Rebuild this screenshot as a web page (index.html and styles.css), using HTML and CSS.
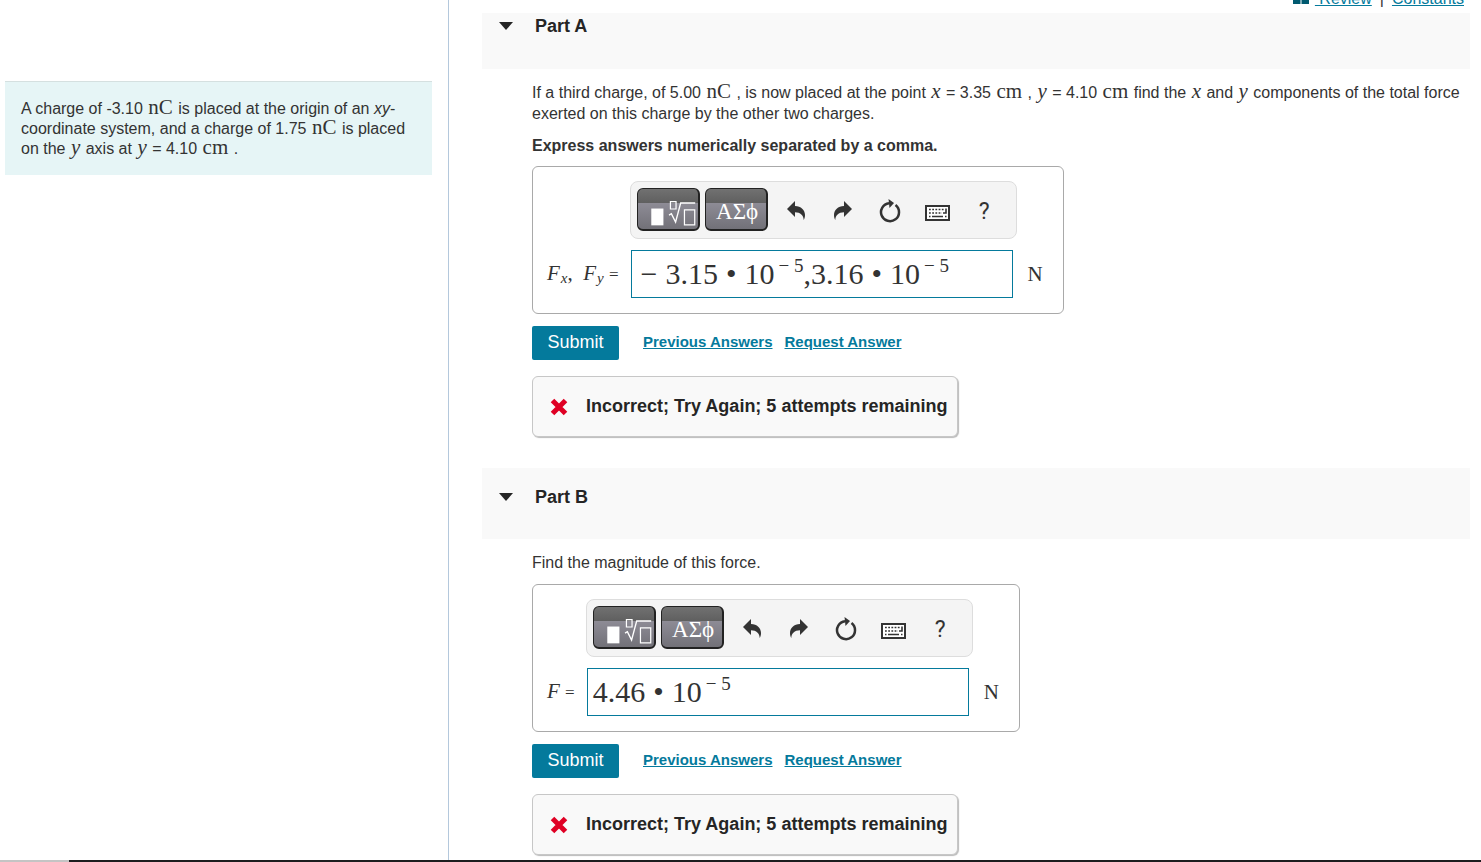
FILE: index.html
```html
<!doctype html>
<html lang="en">
<head>
<meta charset="utf-8">
<title>Force on a third charge</title>
<link rel="stylesheet" href="styles.css">
</head>

<body>
<!-- icons used by both toolbars -->
<svg class="defs" width="0" height="0" aria-hidden="true">
	<symbol id="i-root" viewBox="0 0 61 41">
		<path d="M11 20h13v18H11z" fill="#fff"/>
		<path d="M31.500 12.500h6v8h-6zM46.500 21.500h11v16h-11z" fill="none" stroke="#fff" stroke-width="1.300"/>
		<path d="M30 27l2.500-1.500 4.500 9L42.500 14H58" fill="none" stroke="#fff" stroke-width="1.500"/>
	</symbol>
	<symbol id="i-undo" viewBox="0 0 18 20">
		<path d="M0 8L8 0v5c6 .2 10 4 10 9 0 2-.5 3.600-1.300 5-.2-4.500-3.200-7.600-8.700-7.700V16z"/>
	</symbol>
	<symbol id="i-reset" viewBox="0 0 22 24">
		<path d="M16.500 6A9 9 0 1 1 10 4.200" fill="none" stroke="#333" stroke-width="2.500"/>
		<path d="M9.500 0l5.500 4-4.500 5z"/>
	</symbol>
	<symbol id="i-keys" viewBox="0 0 25 16">
		<path d="M1 1h23v14H1z" fill="#fff" stroke="#333" stroke-width="2"/>
		<path d="M4 4.500h15M4 8h13" fill="none" stroke="#333" stroke-width="1.600" stroke-dasharray="1.800 1.400"/>
		<path d="M21 3.500V8h-3M7 11.500h11M4 11.500h1.500M20 11.500h1.500" fill="none" stroke="#333" stroke-width="1.600"/>
	</symbol>
	<symbol id="i-cross" viewBox="0 0 18 18">
		<path d="M2.500 2.500l13 13M15.500 2.500l-13 13" fill="none" stroke="#df0024" stroke-width="5"/>
	</symbol>
</svg>

<div class="page">
	<aside class="side">
		<p class="intro">A charge of -3.10 <span class="unit">nC</span> is placed at the origin of an <i>xy</i>-coordinate system, and a charge of 1.75 <span class="unit">nC</span> is placed on the <i class="var">y</i> axis at <i class="var">y</i> = 4.10 <span class="unit">cm</span> .</p>
	</aside>

	<main class="main">
		<nav class="top">
			<svg class="book" viewBox="0 0 16 12" aria-hidden="true"><path d="M0 0h7.500v11H0zM8.500 0H16v11H8.500z" fill="#005a70"/></svg>
			<a class="review" href="#">&nbsp;Review</a>
			<span class="bar">|</span>
			<a href="#">Constants</a>
		</nav>

		<section>
			<header class="head head-first">
				<svg class="caret" viewBox="0 0 14 8" aria-hidden="true"><path d="M0 0h14L7 8z"/></svg>
				<h2>Part A</h2>
			</header>
			<div class="part">
				<p class="text">If a third charge, of 5.00 <span class="unit">nC</span> , is now placed at the point <i class="var">x</i> = 3.35 <span class="unit">cm</span> , <i class="var">y</i> = 4.10 <span class="unit">cm</span> find the <i class="var">x</i> and <i class="var">y</i> components of the total force exerted on this charge by the other two charges.</p>
				<p class="hint">Express answers numerically separated by a comma.</p>

				<div class="answer">
					<div class="tools">
						<button class="dark" type="button" aria-label="Templates"><svg><use href="#i-root"/></svg></button>
						<button class="dark" type="button">ΑΣϕ</button>
						<div class="icons">
							<button type="button" aria-label="Undo"><svg class="undo"><use href="#i-undo"/></svg></button>
							<button type="button" aria-label="Redo"><svg class="undo redo"><use href="#i-undo"/></svg></button>
							<button type="button" aria-label="Reset"><svg class="reset"><use href="#i-reset"/></svg></button>
							<button type="button" aria-label="Keyboard"><svg class="keys"><use href="#i-keys"/></svg></button>
							<button type="button">?</button>
						</div>
					</div>
					<div class="label" id="labelA"><i>F<sub>x</sub></i>, &nbsp;<i>F<sub>y</sub></i> <small>=</small></div>
					<div class="field" role="textbox" contenteditable="true" spellcheck="false" aria-labelledby="labelA"><span class="minus">−</span>3.15<b>•</b>10<sup>− 5</sup>,3.16<b>•</b>10<sup>− 5</sup></div>
					<div class="newton">N</div>
				</div>

				<div class="actions">
					<button class="submit" type="button">Submit</button>
					<a href="#">Previous Answers</a>
					<a href="#">Request Answer</a>
				</div>
				<div class="result">
					<svg><use href="#i-cross"/></svg>
					<span>Incorrect; Try Again; 5 attempts remaining</span>
				</div>
			</div>
		</section>

		<section>
			<header class="head">
				<svg class="caret" viewBox="0 0 14 8" aria-hidden="true"><path d="M0 0h14L7 8z"/></svg>
				<h2>Part B</h2>
			</header>
			<div class="part">
				<p class="text">Find the magnitude of this force.</p>

				<div class="answer">
					<div class="tools">
						<button class="dark" type="button" aria-label="Templates"><svg><use href="#i-root"/></svg></button>
						<button class="dark" type="button">ΑΣϕ</button>
						<div class="icons">
							<button type="button" aria-label="Undo"><svg class="undo"><use href="#i-undo"/></svg></button>
							<button type="button" aria-label="Redo"><svg class="undo redo"><use href="#i-undo"/></svg></button>
							<button type="button" aria-label="Reset"><svg class="reset"><use href="#i-reset"/></svg></button>
							<button type="button" aria-label="Keyboard"><svg class="keys"><use href="#i-keys"/></svg></button>
							<button type="button">?</button>
						</div>
					</div>
					<div class="label" id="labelB"><i>F</i> <small>=</small></div>
					<div class="field" role="textbox" contenteditable="true" spellcheck="false" aria-labelledby="labelB">4.46<b>•</b>10<sup>− 5</sup></div>
					<div class="newton">N</div>
				</div>

				<div class="actions">
					<button class="submit" type="button">Submit</button>
					<a href="#">Previous Answers</a>
					<a href="#">Request Answer</a>
				</div>
				<div class="result">
					<svg><use href="#i-cross"/></svg>
					<span>Incorrect; Try Again; 5 attempts remaining</span>
				</div>
			</div>
		</section>
	</main>
</div>
<footer class="foot"><span></span></footer>
</body>
</html>
```

FILE: styles.css
```css
*{ margin:0; padding:0; box-sizing:border-box;}
body{
	min-height:100vh;
	display:flex;
	flex-direction:column;
	background:#fff;
	color:#333;
	font:16px/21px "Liberation Sans", Arial, sans-serif;
}
a{ color:#047a9c;}
button{ border:0; background:none; color:#333; font:inherit; cursor:pointer;}
.defs{ position:absolute;}
.unit,.var{ margin:0 1px; font-family:"Liberation Serif", "Times New Roman", serif; font-size:21px; line-height:1px;}

.page{ flex:1; display:flex;}
.side{
	flex:none;
	width:449px;
	padding:81px 16px 0 5px;
	border-right:1px solid #b4c8dc;
}
.intro{
	padding:17px 16px 16px;
	border-top:1px solid #d5e0e0;
	background:#e6f5f6;
	line-height:20px;
}
.main{ flex:1; min-width:0; padding:0 11px 5px 33px;}

/* top links */
.top{
	height:13px;
	padding:0 6px 4px 0;
	overflow:hidden;
	display:flex;
	justify-content:flex-end;
	align-items:flex-end;
}
.top a,.bar{ flex:none;}
.book{ width:16px; height:12px; margin:0 6px 4px 0;}
.bar{ margin:0 8px;}

/* part heading */
.head{
	display:flex;
	align-items:center;
	gap:22px;
	padding:18px 17px 31px;
	background:#f9f9f9;
	color:#252525;
}
.head-first{ padding:2px 17px 32px;}
.head h2{ font-size:18px; line-height:22px;}
.caret{ width:14px; height:8px; fill:#252525;}
.part{ padding:13px 0 31px 50px;}
section:last-child .part{ padding-bottom:0;}
.text{ margin-bottom:11px;}
.hint{ margin-bottom:10px; font-weight:bold;}

/* answer box */
.answer{
	width:fit-content;
	display:grid;
	grid-template-columns:auto 387px auto;
	row-gap:11px;
	align-items:center;
	padding:14px 20px 15px 14px;
	border:1px solid #a9a9a9;
	border-radius:6px;
}
.tools{
	grid-column:2;
	height:58px;
	display:flex;
	align-items:center;
	gap:5px;
	padding:0 6px;
	border:1px solid #ddd;
	border-radius:8px;
	background:#f4f4f4;
}
.dark{
	width:63px;
	height:43px;
	margin-bottom:2px;
	padding-left:3px;
	border:1px solid #222;
	border-width:1px 2px 2px 1px;
	border-radius:6px;
	background:linear-gradient(#717171, #606060 34%, #8e8c96 34%, #727178);
	color:#fff;
	font:23px/46px "Liberation Serif", serif;
}
.dark svg{ display:block; width:57px; height:40px;}
.icons{ display:flex;}
.icons button{
	width:47px;
	height:43px;
	padding-top:2px;
	display:flex;
	align-items:center;
	justify-content:center;
	font:23px/43px Roboto, sans-serif;
}
.icons svg{ fill:#333;}
.undo{ width:18px; height:20px;}
.redo{ transform:scaleX(-1);}
.reset{ width:22px; height:24px;}
.keys{ width:25px; height:16px; margin-top:4px;}
.label,.newton{ font:21px/24px "Liberation Serif", serif;}
.label{ grid-column:1; padding-right:11px;}
.label sub{ margin-left:1px; font-size:15px; line-height:1px; vertical-align:-3px;}
.label small{ font-size:17px;}
.newton{ padding-left:11px;}
.field{
	width:382px;
	height:48px;
	margin-left:1px;
	padding:0 5px;
	border:1px solid #047a9c;
	font:30px/46px "Liberation Serif", serif;
	white-space:nowrap;
	overflow:hidden;
}
.field b{ margin:0 8px; font-weight:normal;}
.field sup{ margin-left:4px; font-size:19px; line-height:1px; vertical-align:12px;}
.minus{ margin:0 8px 0 4px;}

.actions{ display:flex; align-items:center; margin:12px 0 16px;}
.actions a{ margin-right:12px; padding-bottom:3px; font-size:15px; font-weight:bold;}
.submit{
	width:87px;
	height:34px;
	margin-right:24px;
	padding-bottom:2px;
	border-radius:2px;
	background:#047a9c;
	color:#fff;
	font-size:18px;
}
.result{
	width:fit-content;
	display:flex;
	align-items:center;
	gap:18px;
	height:61px;
	padding:0 10px 0 17px;
	border:1px solid #c7c7c7;
	border-radius:6px;
	box-shadow:1px 1px 1px #bbb;
	background:#f9f9f9;
	color:#252525;
	font-size:18px;
	font-weight:bold;
}
.result svg{ width:18px; height:18px;}

.foot{ height:2px; background:#1c1c1e;}
.foot span{ display:block; width:69px; height:2px; background:#c4c4c4;}
```
